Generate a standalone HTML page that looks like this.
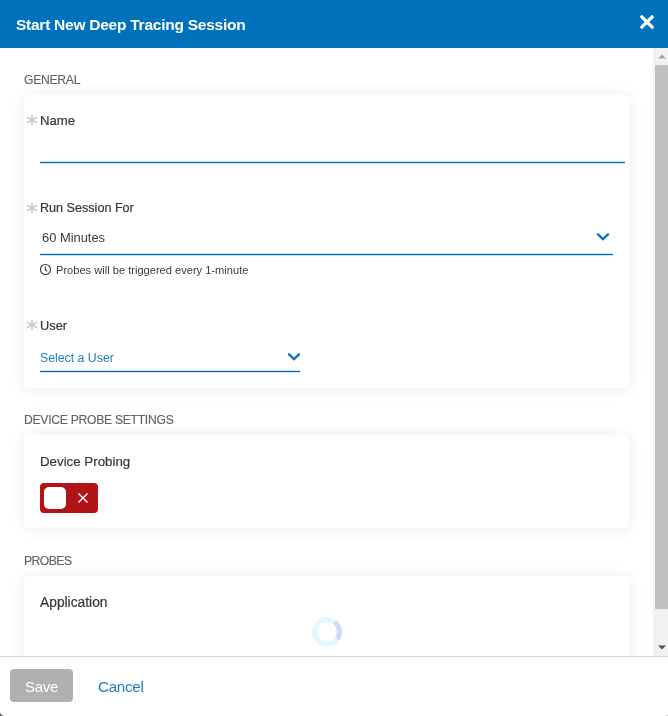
<!DOCTYPE html>
<html><head><meta charset="utf-8">
<style>
html,body{margin:0;padding:0;width:668px;height:716px;overflow:hidden;background:#5a5e64;}
.dlg{position:absolute;left:0;top:0;width:668px;height:716px;background:#fff;border-radius:0 0 2px 5px;overflow:hidden;}
.t{position:absolute;white-space:nowrap;line-height:1;font-family:"Liberation Sans",sans-serif;will-change:transform;}
.hdr{position:absolute;left:0;top:0;width:668px;height:48px;background:#0072bc;}
.card{position:absolute;left:24px;width:605px;background:#fff;border-radius:5px;box-shadow:0 1px 16px rgba(10,30,60,0.085);}
.ul{position:absolute;height:1px;background:#0070bd;box-shadow:0 0.6px 0 rgba(0,112,189,0.35),0 -0.6px 0 rgba(0,112,189,0.35);}
.tg{position:absolute;left:40px;top:483px;width:58px;height:30px;background:#b01419;border-radius:4px;}
.knob{position:absolute;left:4px;top:4px;width:22px;height:22px;background:#fff;border-radius:5px;}
.sb{position:absolute;left:653px;top:48px;width:15px;height:608px;background:#f1f1f1;}
.th{position:absolute;left:2px;top:17px;width:13px;height:544px;background:#c1c1c1;}
.ftr{position:absolute;left:0;top:656px;width:668px;height:60px;background:#fff;border-top:1px solid #d0d2d5;box-sizing:border-box;}
.save{position:absolute;left:10px;top:669px;width:63px;height:33px;background:#b0b0b0;border-radius:4px;}
</style></head><body>
<div class="dlg">
<div class="hdr"></div>
<div class="t" style="left:16px;top:17.38px;font-size:15.5px;color:#fff;font-weight:bold;letter-spacing:-0.25px;">Start New Deep Tracing Session</div>
<svg style="position:absolute;left:639px;top:14px" width="16" height="16" viewBox="0 0 16 16"><path d="M2.8 2.8L13.2 13.2M13.2 2.8L2.8 13.2" stroke="#fff" stroke-width="3.3" stroke-linecap="round"/></svg>
<div class="card" style="top:95px;height:293px"></div>
<div class="card" style="top:435px;height:93px"></div>
<div class="card" style="top:576px;height:120px"></div>
<div class="t" style="left:24px;top:74.17px;font-size:12.2px;color:#646464;font-weight:normal;letter-spacing:-0.3px;-webkit-text-stroke:0.15px;">GENERAL</div>
<svg style="position:absolute;left:26px;top:114px" width="12" height="12" viewBox="0 0 12 12"><g stroke="#c4c4c4" stroke-width="1.4" stroke-linecap="butt"><path d="M6 1V11"/><path d="M1.2 3.3L10.8 8.7"/><path d="M1.2 8.7L10.8 3.3"/></g></svg>
<div class="t" style="left:40px;top:114.33px;font-size:13.2px;color:#363636;font-weight:normal;-webkit-text-stroke:0.2px;">Name</div>
<div class="ul" style="left:40px;top:162px;width:585px"></div>
<svg style="position:absolute;left:26px;top:201.5px" width="12" height="12" viewBox="0 0 12 12"><g stroke="#c4c4c4" stroke-width="1.4" stroke-linecap="butt"><path d="M6 1V11"/><path d="M1.2 3.3L10.8 8.7"/><path d="M1.2 8.7L10.8 3.3"/></g></svg>
<div class="t" style="left:40px;top:201.83px;font-size:12.6px;color:#363636;font-weight:normal;-webkit-text-stroke:0.2px;">Run Session For</div>
<div class="t" style="left:42px;top:231.58px;font-size:12.9px;color:#3b3b3b;font-weight:normal;">60 Minutes</div>
<svg style="position:absolute;left:596px;top:232px" width="14" height="10" viewBox="0 0 14 10"><path d="M2 2.3L7 7.1L12 2.3" fill="none" stroke="#0f72ba" stroke-width="2.3" stroke-linecap="round" stroke-linejoin="miter"/></svg>
<div class="ul" style="left:40px;top:254px;width:573px"></div>
<svg style="position:absolute;left:39px;top:263px" width="13" height="13" viewBox="0 0 13 13"><circle cx="6.5" cy="6.5" r="5" fill="none" stroke="#333" stroke-width="1.1"/><path d="M6.3 3.6V6.8L8.2 8.2" fill="none" stroke="#333" stroke-width="1.1"/></svg>
<div class="t" style="left:55.5px;top:265.10px;font-size:11.1px;color:#3b3b3b;font-weight:normal;">Probes will be triggered every 1-minute</div>
<svg style="position:absolute;left:26px;top:319px" width="12" height="12" viewBox="0 0 12 12"><g stroke="#c4c4c4" stroke-width="1.4" stroke-linecap="butt"><path d="M6 1V11"/><path d="M1.2 3.3L10.8 8.7"/><path d="M1.2 8.7L10.8 3.3"/></g></svg>
<div class="t" style="left:40px;top:319.66px;font-size:12.8px;color:#363636;font-weight:normal;-webkit-text-stroke:0.2px;">User</div>
<div class="t" style="left:40px;top:352.09px;font-size:12.3px;color:#1f7cc1;font-weight:normal;">Select a User</div>
<svg style="position:absolute;left:287px;top:352px" width="14" height="10" viewBox="0 0 14 10"><path d="M2 2.3L7 7.1L12 2.3" fill="none" stroke="#0f72ba" stroke-width="2.3" stroke-linecap="round" stroke-linejoin="miter"/></svg>
<div class="ul" style="left:40px;top:371px;width:260px"></div>
<div class="t" style="left:24px;top:414.17px;font-size:12.2px;color:#646464;font-weight:normal;letter-spacing:-0.3px;-webkit-text-stroke:0.15px;">DEVICE PROBE SETTINGS</div>
<div class="t" style="left:40px;top:455.24px;font-size:13.3px;color:#363636;font-weight:normal;-webkit-text-stroke:0.2px;">Device Probing</div>
<div class="tg"><div class="knob"></div><svg style="position:absolute;left:37px;top:9px" width="12" height="12" viewBox="0 0 12 12"><path d="M1.5 1.5L10.5 10.5M10.5 1.5L1.5 10.5" stroke="#fff" stroke-width="1.4"/></svg></div>
<div class="t" style="left:24px;top:555.17px;font-size:12.2px;color:#646464;font-weight:normal;letter-spacing:-0.55px;-webkit-text-stroke:0.15px;">PROBES</div>
<div class="t" style="left:40px;top:595.82px;font-size:13.8px;color:#363636;font-weight:normal;-webkit-text-stroke:0.2px;">Application</div>
<svg style="position:absolute;left:311px;top:616px" width="32" height="32" viewBox="0 0 32 32"><circle cx="16" cy="16" r="12.5" fill="none" stroke="#e0f7fd" stroke-width="5"/><path d="M23.70 6.15A12.5 12.5 0 0 1 26.36 22.99" fill="none" stroke="#d3dbf1" stroke-width="5"/></svg>
<div class="sb"><div class="th"></div><svg style="position:absolute;left:5px;top:6px" width="8" height="5" viewBox="0 0 8 5"><path d="M0 4.5L4 0.5L8 4.5Z" fill="#a3a3a3"/></svg><svg style="position:absolute;left:5px;top:597px" width="8" height="5" viewBox="0 0 8 5"><path d="M0 0.5L4 4.5L8 0.5Z" fill="#505050"/></svg></div>
<div class="ftr"></div>
<div class="save"></div>
<div class="t" style="left:25px;top:678.80px;font-size:15px;color:#fff;font-weight:normal;letter-spacing:-0.3px;">Save</div>
<div class="t" style="left:98px;top:678.63px;font-size:15.2px;color:#1f7cc1;font-weight:normal;letter-spacing:-0.3px;">Cancel</div>
</div>
</body></html>
